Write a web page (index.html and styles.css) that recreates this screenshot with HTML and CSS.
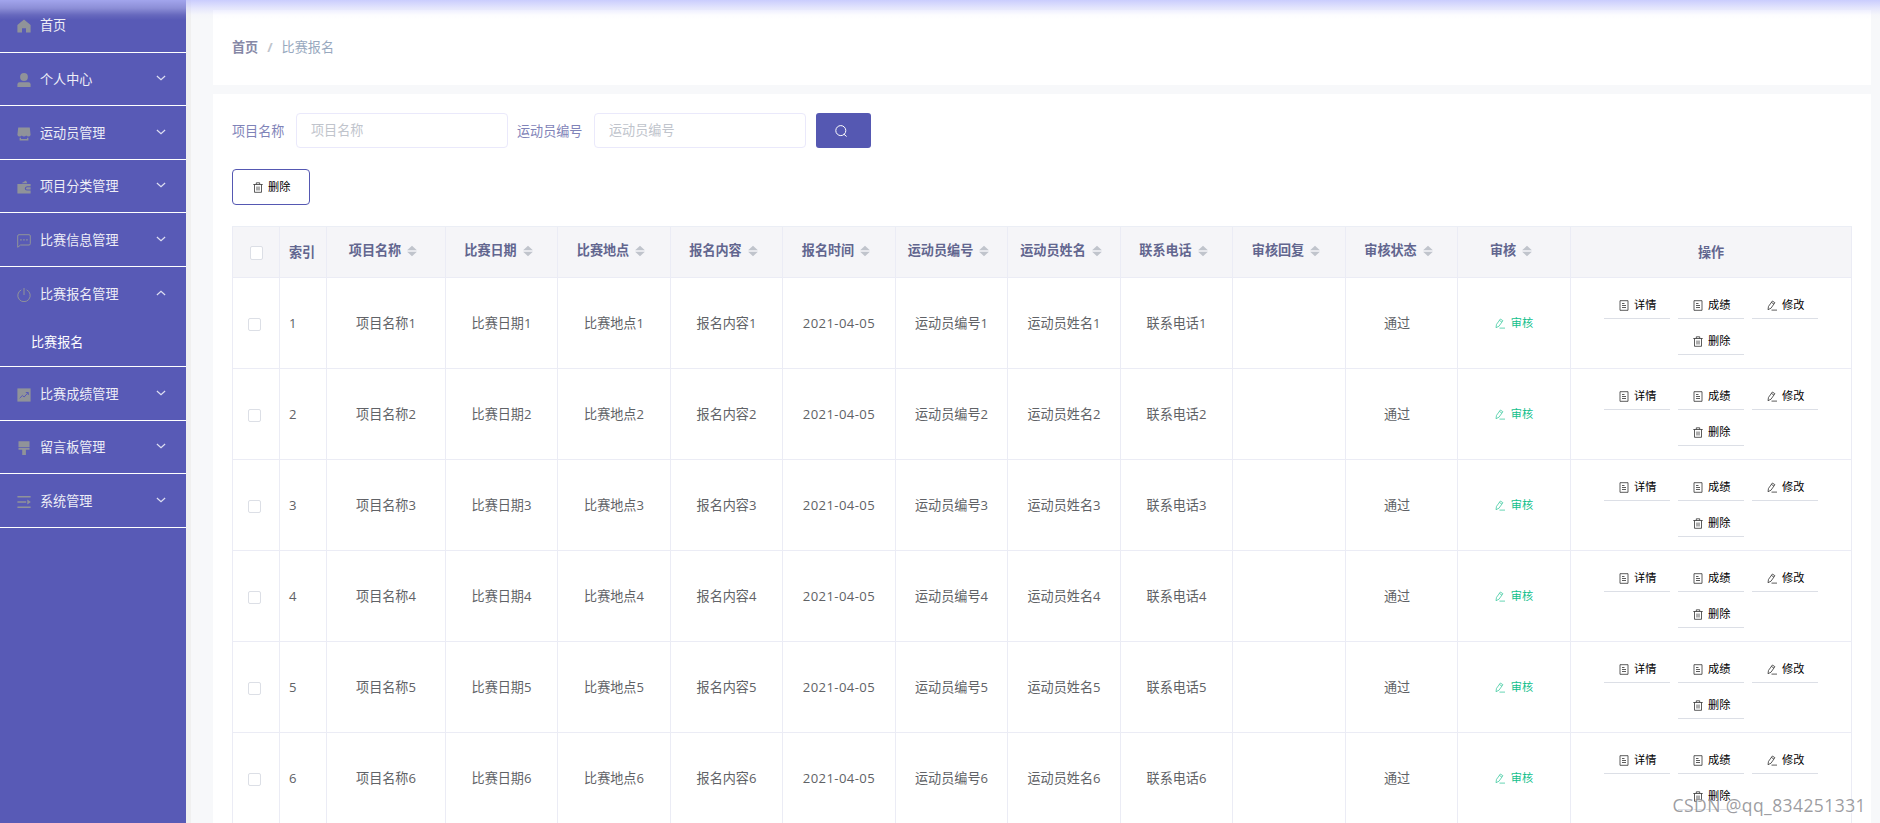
FILE: index.html
```html
<!DOCTYPE html>
<html lang="zh-CN">
<head>
<meta charset="utf-8">
<title>比赛报名</title>
<link rel="stylesheet" href="styles.css">
</head>
<body>
<svg class="defs" width="0" height="0">
  <symbol id="i-home" viewBox="0 0 14 14"><path d="M7 .6 13.600 6v7.600H9V9.200H5v4.400H.4V6z"/></symbol>
  <symbol id="i-user" viewBox="0 0 14 14"><circle cx="7" cy="4" r="3.900"/><path d="M.4 14v-2.500q0-2.200 2.200-2.200h8.800q2.200 0 2.200 2.200V14z"/></symbol>
  <symbol id="i-shop" viewBox="0 0 14 14"><path d="M1.200.4h11.600l.8 7.600q-.6 1.600-2.200 1.600-1.400 0-2.200-1-.9 1-2.200 1t-2.200-1q-.8 1-2.200 1Q1 9.600.4 8zM2.600 10.800h1.400v1.200h6v-1.200h1.400v2.600H2.600z"/></symbol>
  <symbol id="i-wallet" viewBox="0 0 14 14"><path d="M4.500 3.200 9 .6l1.300 2.600zM.4 4h13.200v2.200H10q-2.200.2-2.200 2.200T10 10.600h3.600v2.800H.4zM10 7.200h3.600v2.400H10Q8.900 9.400 8.900 8.400T10 7.200z"/></symbol>
  <symbol id="i-chat" viewBox="0 0 14 14"><path fill="none" stroke="currentColor" d="M.7 13.300V2Q.7.700 2 .7h10q1.300 0 1.300 1.300v7.700q0 1.300-1.300 1.300H3.500z"/><path d="M3.200 5.300h1.500v1.200H3.200zm3 0h1.500v1.200H6.200zm3 0h1.500v1.200H9.200z"/></symbol>
  <symbol id="i-power" viewBox="0 0 14 14"><path fill="none" stroke="currentColor" d="M7 0v7M4.300 1.900a6.200 6.200 0 1 0 5.400 0"/></symbol>
  <symbol id="i-chart" viewBox="0 0 14 14"><path d="M.4.400h13.200v13.200H.4z"/><path fill="none" stroke="#585ab6" d="m2.700 10.200 2.700-2.700 1.700 1.500 3.900-4.200M8.800 4.500h2.500V7"/></symbol>
  <symbol id="i-brush" viewBox="0 0 14 14"><path d="M1.500.2h11v6h-11zM1.500 7h11v1.800H8.900V14H5.200V8.800H1.500z"/></symbol>
  <symbol id="i-menu" viewBox="0 0 14 14"><path d="M.4 1h13.200v1.500H.4zm0 5.200h8.800v1.600H.4zm0 5.200h13.200v1.500H.4zM10.300 4.500 13.800 7l-3.500 2.500z"/></symbol>
  <symbol id="i-down" viewBox="0 0 10 6"><path fill="none" stroke="currentColor" stroke-width="1.200" d="m.9 1 4.100 3.700L9.100 1"/></symbol>
  <symbol id="i-up" viewBox="0 0 10 6"><path fill="none" stroke="currentColor" stroke-width="1.200" d="m.9 5 4.100-3.700L9.100 5"/></symbol>
  <symbol id="i-search" viewBox="0 0 12 12"><circle cx="5.800" cy="5.600" r="5" fill="none" stroke="currentColor"/><path fill="none" stroke="currentColor" d="m8.800 9.100 2.800 2.400"/></symbol>
  <symbol id="i-del" viewBox="0 0 10 11"><path fill="none" stroke="currentColor" stroke-width=".8" d="M.3 2.500h9.400M3.300 2.400V.8h3.400v1.600M1.500 2.500v7.800h7V2.500M4 4.500v4M6 4.500v4"/></symbol>
  <symbol id="i-doc" viewBox="0 0 10 11"><path fill="none" stroke="currentColor" stroke-width=".8" d="M1 .7h8v9.600H1zM3 3.500h2.500M3 5.500h4M3 7.500h4"/></symbol>
  <symbol id="i-edit" viewBox="0 0 10 11"><path fill="none" stroke="currentColor" stroke-width=".8" d="M1 9.700 1.500 6.400 5.400 1 7.900 2.700 4 8.200zM4.400 2.400l2.500 1.700M4.500 10.100H10"/></symbol>
  <symbol id="i-sort" viewBox="0 0 10 12"><path d="M5 .8 9.900 5.200H.1zM5 11.200.1 6.800h9.800z"/></symbol>
</svg>

<div class="app">
  <nav class="sidebar">
    <div class="item first"><svg class="ico"><use href="#i-home"/></svg><span>首页</span></div>
    <div class="item"><svg class="ico"><use href="#i-user"/></svg><span>个人中心</span><svg class="arrow"><use href="#i-down"/></svg></div>
    <div class="item tall"><svg class="ico"><use href="#i-shop"/></svg><span>运动员管理</span><svg class="arrow"><use href="#i-down"/></svg></div>
    <div class="item"><svg class="ico"><use href="#i-wallet"/></svg><span>项目分类管理</span><svg class="arrow"><use href="#i-down"/></svg></div>
    <div class="item tall"><svg class="ico"><use href="#i-chat"/></svg><span>比赛信息管理</span><svg class="arrow"><use href="#i-down"/></svg></div>
    <div class="item open"><svg class="ico"><use href="#i-power"/></svg><span>比赛报名管理</span><svg class="arrow"><use href="#i-up"/></svg></div>
    <div class="subitem">比赛报名</div>
    <div class="item tall"><svg class="ico"><use href="#i-chart"/></svg><span>比赛成绩管理</span><svg class="arrow"><use href="#i-down"/></svg></div>
    <div class="item"><svg class="ico"><use href="#i-brush"/></svg><span>留言板管理</span><svg class="arrow"><use href="#i-down"/></svg></div>
    <div class="item tall"><svg class="ico"><use href="#i-menu"/></svg><span>系统管理</span><svg class="arrow"><use href="#i-down"/></svg></div>
  </nav>

  <main class="main">
    <div class="card crumbs"><b>首页</b><i>/</i><span>比赛报名</span></div>
    <section class="card content">
      <form class="search">
        <label>项目名称</label><input type="text" placeholder="项目名称">
        <label>运动员编号</label><input type="text" placeholder="运动员编号">
        <button type="button"><svg><use href="#i-search"/></svg></button>
      </form>
      <button type="button" class="remove"><svg class="bi"><use href="#i-del"/></svg>删除</button>

      <table>
        <colgroup><col class="w48"><col class="w47"><col class="w119"><col class="w112"><col class="w113"><col class="w112"><col class="w113"><col class="w112"><col class="w113"><col class="w112"><col class="w113"><col class="w112"><col class="w113"><col class="w281"></colgroup>
        <thead>
          <tr>
            <th><span class="box"></span></th><th class="idx">索引</th>
            <th class="s">项目名称<svg><use href="#i-sort"/></svg></th>
            <th class="s">比赛日期<svg><use href="#i-sort"/></svg></th>
            <th class="s">比赛地点<svg><use href="#i-sort"/></svg></th>
            <th class="s">报名内容<svg><use href="#i-sort"/></svg></th>
            <th class="s">报名时间<svg><use href="#i-sort"/></svg></th>
            <th class="s">运动员编号<svg><use href="#i-sort"/></svg></th>
            <th class="s">运动员姓名<svg><use href="#i-sort"/></svg></th>
            <th class="s">联系电话<svg><use href="#i-sort"/></svg></th>
            <th class="s">审核回复<svg><use href="#i-sort"/></svg></th>
            <th class="s">审核状态<svg><use href="#i-sort"/></svg></th>
            <th class="s">审核<svg><use href="#i-sort"/></svg></th>
            <th>操作</th>
          </tr>
        </thead>
        <tbody>
          <tr>
            <td><span class="box"></span></td><td class="idx">1</td><td>项目名称1</td><td>比赛日期1</td><td>比赛地点1</td><td>报名内容1</td><td class="date">2021-04-05</td><td>运动员编号1</td><td>运动员姓名1</td><td>联系电话1</td><td></td><td class="state">通过</td>
            <td><a class="audit"><svg class="bi"><use href="#i-edit"/></svg>审核</a></td>
            <td><div class="ops"><a><svg class="bi"><use href="#i-doc"/></svg>详情</a><a><svg class="bi"><use href="#i-doc"/></svg>成绩</a><a><svg class="bi"><use href="#i-edit"/></svg>修改</a><a><svg class="bi"><use href="#i-del"/></svg>删除</a></div></td>
          </tr>
          <tr>
            <td><span class="box"></span></td><td class="idx">2</td><td>项目名称2</td><td>比赛日期2</td><td>比赛地点2</td><td>报名内容2</td><td class="date">2021-04-05</td><td>运动员编号2</td><td>运动员姓名2</td><td>联系电话2</td><td></td><td class="state">通过</td>
            <td><a class="audit"><svg class="bi"><use href="#i-edit"/></svg>审核</a></td>
            <td><div class="ops"><a><svg class="bi"><use href="#i-doc"/></svg>详情</a><a><svg class="bi"><use href="#i-doc"/></svg>成绩</a><a><svg class="bi"><use href="#i-edit"/></svg>修改</a><a><svg class="bi"><use href="#i-del"/></svg>删除</a></div></td>
          </tr>
          <tr>
            <td><span class="box"></span></td><td class="idx">3</td><td>项目名称3</td><td>比赛日期3</td><td>比赛地点3</td><td>报名内容3</td><td class="date">2021-04-05</td><td>运动员编号3</td><td>运动员姓名3</td><td>联系电话3</td><td></td><td class="state">通过</td>
            <td><a class="audit"><svg class="bi"><use href="#i-edit"/></svg>审核</a></td>
            <td><div class="ops"><a><svg class="bi"><use href="#i-doc"/></svg>详情</a><a><svg class="bi"><use href="#i-doc"/></svg>成绩</a><a><svg class="bi"><use href="#i-edit"/></svg>修改</a><a><svg class="bi"><use href="#i-del"/></svg>删除</a></div></td>
          </tr>
          <tr>
            <td><span class="box"></span></td><td class="idx">4</td><td>项目名称4</td><td>比赛日期4</td><td>比赛地点4</td><td>报名内容4</td><td class="date">2021-04-05</td><td>运动员编号4</td><td>运动员姓名4</td><td>联系电话4</td><td></td><td class="state">通过</td>
            <td><a class="audit"><svg class="bi"><use href="#i-edit"/></svg>审核</a></td>
            <td><div class="ops"><a><svg class="bi"><use href="#i-doc"/></svg>详情</a><a><svg class="bi"><use href="#i-doc"/></svg>成绩</a><a><svg class="bi"><use href="#i-edit"/></svg>修改</a><a><svg class="bi"><use href="#i-del"/></svg>删除</a></div></td>
          </tr>
          <tr>
            <td><span class="box"></span></td><td class="idx">5</td><td>项目名称5</td><td>比赛日期5</td><td>比赛地点5</td><td>报名内容5</td><td class="date">2021-04-05</td><td>运动员编号5</td><td>运动员姓名5</td><td>联系电话5</td><td></td><td class="state">通过</td>
            <td><a class="audit"><svg class="bi"><use href="#i-edit"/></svg>审核</a></td>
            <td><div class="ops"><a><svg class="bi"><use href="#i-doc"/></svg>详情</a><a><svg class="bi"><use href="#i-doc"/></svg>成绩</a><a><svg class="bi"><use href="#i-edit"/></svg>修改</a><a><svg class="bi"><use href="#i-del"/></svg>删除</a></div></td>
          </tr>
          <tr>
            <td><span class="box"></span></td><td class="idx">6</td><td>项目名称6</td><td>比赛日期6</td><td>比赛地点6</td><td>报名内容6</td><td class="date">2021-04-05</td><td>运动员编号6</td><td>运动员姓名6</td><td>联系电话6</td><td></td><td class="state">通过</td>
            <td><a class="audit"><svg class="bi"><use href="#i-edit"/></svg>审核</a></td>
            <td><div class="ops"><a><svg class="bi"><use href="#i-doc"/></svg>详情</a><a><svg class="bi"><use href="#i-doc"/></svg>成绩</a><a><svg class="bi"><use href="#i-edit"/></svg>修改</a><a><svg class="bi"><use href="#i-del"/></svg>删除</a></div></td>
          </tr>
        </tbody>
      </table>
    </section>
  </main>
</div>
<div class="topshade"></div>
<div class="watermark">CSDN @qq_834251331</div>
</body>
</html>
```
FILE: styles.css
```css
* { box-sizing: border-box; }
html, body { margin: 0; height: 823px; overflow: hidden; }
body {
  font-family: "Open Sans", "Noto Sans CJK SC", sans-serif;
  font-size: 13.1px;
  line-height: 20px;
  color: #606266;
}
svg { display: block; fill: currentColor; flex: none; }
.defs { position: absolute; }
.app { display: flex; height: 823px; overflow: hidden; }

/* Sidebar */
.sidebar { width: 186px; flex: none; background: #585ab6; color: #eeeef6; }
.item {
  display: flex;
  align-items: center;
  height: 53px;
  padding: 2px 20px 0 17px;
  border-bottom: 1px solid #fff;
}
.item.first { padding-top: 0; }
.item.tall { height: 54px; }
.item.open { height: 54px; border-bottom: 0; }
.item span { flex: 1; margin-left: 9px; padding-bottom: 2px; white-space: nowrap; }
.ico { width: 14px; height: 14px; color: #909399; }
.arrow { width: 10px; height: 6px; margin-top: -4px; color: #dedff2; }
.subitem {
  height: 46px;
  padding: 11px 0 0 31px;
  border-bottom: 1px solid #fff;
  color: #fff;
}

/* Main column */
.main {
  flex: 1;
  min-width: 0;
  padding: 10px 9px 0 22px;
  background: #f7f8fa;
  border-left: 5px solid #f0f0f0;
}
.card { background: #fff; }
.crumbs {
  display: flex;
  align-items: center;
  height: 75px;
  margin-bottom: 9px;
  padding: 0 19px 2px;
  color: #97a8be;
}
.crumbs b { color: #8688a6; font-weight: 700; }
.crumbs i { margin: 0 9px; color: #c0c4cc; font-style: normal; font-weight: 700; }
.content { height: 740px; padding: 19px 19px 0; }

.search { display: flex; align-items: center; height: 35px; }
.search label { margin-right: 11.600px; color: #7f83b8; white-space: nowrap; }
.search input {
  width: 212px;
  height: 35px;
  margin-right: 9px;
  padding: 0 14px 2px;
  border: 1px solid #eae9fb;
  border-radius: 4px;
  outline: 0;
  font: inherit;
}
.search input::placeholder { color: #c0c4cc; opacity: 1; }
.search button {
  width: 55px;
  height: 35px;
  margin-left: 1px;
  padding: 0 0 0 19px;
  border: 0;
  border-radius: 3px;
  background: #5558b2;
  color: #fff;
}
.search button svg { width: 12px; height: 12px; }
.remove {
  display: flex;
  align-items: center;
  width: 78px;
  height: 36px;
  margin: 21px 0;
  padding: 0 0 0 20px;
  border: 1px solid #5558b2;
  border-radius: 4px;
  background: #fff;
  font: 11.200px/20px "Open Sans", "Noto Sans CJK SC", sans-serif;
  color: #000;
}
.bi { width: 10px; height: 11px; margin-right: 5px; opacity: .8; }

/* Table */
table {
  width: 1620px;
  table-layout: fixed;
  border-collapse: separate;
  border-spacing: 0;
  border-top: 1px solid #ebeef5;
  text-align: center;
}
.w48 { width: 48px; }
.w47 { width: 47px; }
.w119 { width: 119px; }
.w112 { width: 112px; }
.w113 { width: 113px; }
.w281 { width: 281px; }
th, td {
  padding: 0;
  border: solid #ebecf5;
  border-width: 0 1px 1px 0;
  white-space: nowrap;
}
th:first-child, td:first-child { border-left-width: 1px; }
th { height: 51px; background: #f5f5f8; color: #62668f; font-weight: 700; }
th.s { padding: 0 6px 5px 0; }
th.s svg { display: inline-block; width: 10px; height: 12px; margin-left: 6px; vertical-align: -2px; color: #c0c4cc; }
td { height: 91px; }
th.idx, td.idx { padding-left: 9px; text-align: left; }
td.date { letter-spacing: .4px; }
td.state { padding-right: 9px; }
.box {
  display: block;
  width: 13px;
  height: 13px;
  margin: 3px 0 0 15px;
  border: 1px solid #dcdfe6;
  border-radius: 2px;
  background: #fff;
}
th .box { height: 14px; margin: 2px 0 0 17px; }
.audit {
  display: flex;
  align-items: center;
  justify-content: center;
  font-size: 11.200px;
  color: #13bf8c;
}
.audit .bi { margin-right: 6px; }
.ops {
  display: flex;
  flex-wrap: wrap;
  justify-content: center;
  gap: 1px 8px;
  padding: 0 30px 7px;
}
.ops a {
  display: flex;
  align-items: center;
  width: 66px;
  height: 35px;
  padding: 8px 0 0 15px;
  border-bottom: 1px solid #dcdfe6;
  font-size: 11.200px;
  color: #000;
}

/* Overlays */
.topshade {
  position: absolute;
  inset: 0 0 auto;
  height: 20px;
  background: linear-gradient(rgba(187, 190, 255, .75), rgba(205, 207, 255, .45) 40%, rgba(230, 230, 255, .1) 75%, rgba(255, 255, 255, 0));
}
.watermark {
  position: absolute;
  right: 14px;
  bottom: 6px;
  font: 17.500px/24px "Open Sans", sans-serif;
  letter-spacing: .42px;
  color: rgba(140, 140, 144, .85);
  text-shadow: 1px 1px 1px #fff;
}
```
